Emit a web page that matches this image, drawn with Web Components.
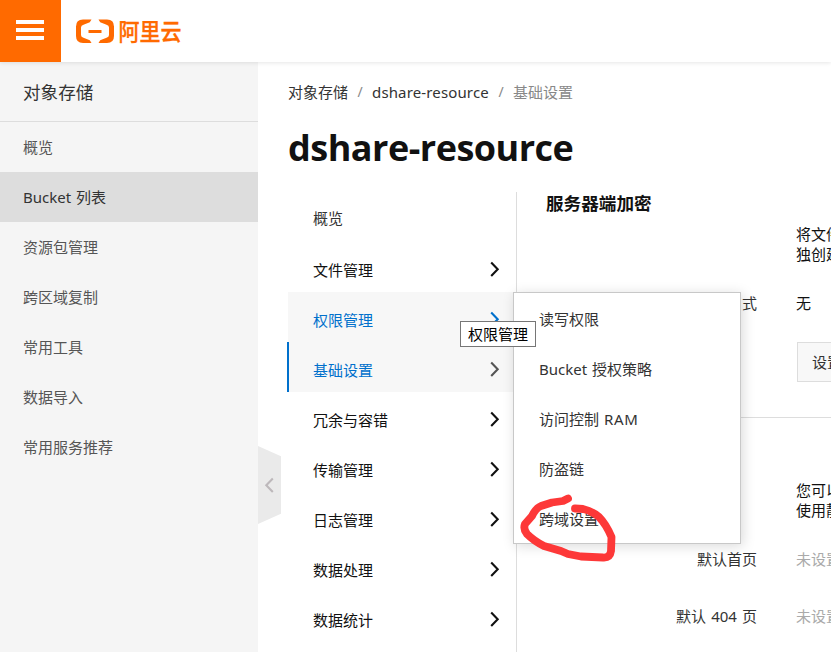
<!DOCTYPE html>
<html lang="zh-CN">
<head>
<meta charset="utf-8">
<title>dshare-resource</title>
<style>
html,body{margin:0;height:100%;overflow:hidden}
body{font:15px/20px "Noto Sans","Noto Sans CJK SC",sans-serif;color:#333;background:#fff}
</style>
</head>
<body>
<console-app></console-app>
<script>
function define(name, html) {
  customElements.define(name, class extends HTMLElement {
    constructor() {
      super();
      this.attachShadow({mode: 'open'}).innerHTML = html;
    }
  });
}

define('chevron-icon', `<style>
:host{display:block;width:10px;height:16px;flex:none}
:host([left]){transform:scaleX(-1)}
svg{display:block}
</style><svg width="10" height="16" viewBox="0 0 10 16" fill="none" stroke="currentColor" stroke-width="2.1"><path d="M1.2 1.500 7.700 8.200 1.200 14.900"/></svg>`);

define('top-bar', `<style>
:host{display:flex;height:62px;background:#fff;position:relative;z-index:2;box-shadow:0 1px 4px rgba(0,0,0,.1)}
.menu{width:61px;background:#ff6a00;display:flex;flex-direction:column;align-items:center;gap:4px;padding-top:19.5px;box-sizing:border-box}
.menu i{width:28px;height:4px;background:#fff;margin-right:2px}
.brand{display:flex;align-items:flex-start;padding:19px 0 0 15px;color:#ff6a00}
.name{font:500 21px/25px "Noto Sans CJK SC",sans-serif;margin-left:4.5px;margin-top:-1px;-webkit-text-stroke:.3px #ff6a00;transform:scaleY(1.1)}
</style>
<div class="menu"><i></i><i></i><i></i></div>
<div class="brand">
<svg width="38" height="24" viewBox="0 0 38 24" fill="#ff6a00"><path d="M15.500 .5H7Q0 .5 0 7.500V17Q0 24 7 24H15.500L13.800 21.200 7.500 18.800Q5 18 5 16V8.500Q5 6.500 7.500 5.700L13.800 3.300ZM22.500 .5H31Q38 .5 38 7.500V17Q38 24 31 24H22.500L24.200 21.200 30.500 18.800Q33 18 33 16V8.500Q33 6.500 30.500 5.700L24.200 3.300ZM12.500 11H25.500V14H12.500Z"/></svg>
<span class="name">阿里云</span></div>`);

define('side-item', `<style>
:host{display:flex;align-items:center;height:50px;padding-left:23px;color:#555;box-sizing:border-box}
:host([active]){background:#ddd;color:#333;word-spacing:1px}
</style><span><slot></slot></span>`);

define('side-bar', `<style>
:host{display:block;width:258px;background:#f5f5f5;flex:none}
.title{height:59px;border-bottom:1px solid #ddd;display:flex;align-items:center;padding-left:23px;font-size:17.6px;color:#333}
</style><div class="title"><span>对象存储</span></div><slot></slot>`);

define('collapse-handle', `<style>
:host{position:absolute;left:258px;top:446px;width:23px;height:78px;background:#eaeaea;color:#bdb8bb;clip-path:polygon(0 0,100% 13%,100% 87%,0 100%);display:flex;align-items:center;padding-left:6px;box-sizing:border-box}
</style><chevron-icon left></chevron-icon>`);

define('bread-crumb', `<style>
:host{display:flex;height:20px;align-items:center}
i{font-style:normal;color:#888;width:24px;text-align:center;font-size:14px}
.last{color:#888}
.mid{width:117px;letter-spacing:.14px}
</style><span>对象存储</span><i>/</i><span class="mid">dshare-resource</span><i>/</i><span class="last">基础设置</span>`);

define('nav-item', `<style>
:host{display:flex;align-items:center;height:50px;padding:5px 16px 0 25px;box-sizing:border-box;color:#111;justify-content:space-between}
:host([plain]){color:#333;padding-top:2px}
:host([plain]) chevron-icon{display:none}
:host([lit]){background:#f7f7f7;color:#0070cc}
:host([current]){border-left:2px solid #0070cc;margin-left:-1px;padding-left:24px}
:host([current]) chevron-icon{color:#555}
chevron-icon{margin-bottom:1px}
</style><span><slot></slot></span><chevron-icon></chevron-icon>`);

define('sub-nav', `<style>
:host{display:block;width:228px;height:460px;border-right:1px solid #ddd;flex:none}
</style><slot></slot>`);

define('form-row', `<style>
:host{display:grid;grid-template-columns:211px 1fr;column-gap:39px;line-height:20px;white-space:nowrap;color:#333}
.l{text-align:right}
</style><div class="l"><slot name="label"></slot></div><div><slot></slot></div>`);

define('detail-panel', `<style>
:host{display:block;flex:1;min-width:0;overflow:hidden;padding-left:29px;height:460px;box-sizing:border-box}
h2{font-size:17.6px;line-height:24px;margin:-1px 0 9px;color:#111;font-weight:700}
.a{display:flow-root;border-bottom:1px solid #ddd;box-sizing:border-box;height:226px}
.d{color:#111}.m{color:#aaa}
button{font:inherit;display:block;height:40px;width:62px;box-sizing:border-box;padding:0 14px;border:1px solid #ddd;background:#f8f8f8;color:#333;margin-left:1px;text-align:left}
</style>
<div class="a"><h2>服务器端加密</h2>
<form-row style="color:#111">将文件<br>独创建</form-row>
<form-row style="margin-top:29px"><span slot="label">式</span><span class="d">无</span></form-row>
<form-row style="margin-top:29px"><button>设置</button></form-row></div>
<form-row style="margin-top:62px;color:#111">您可以<br>使用静</form-row>
<form-row style="margin-top:29px"><span slot="label">默认首页</span><span class="m">未设置</span></form-row>
<form-row style="margin-top:37px"><span slot="label" style="word-spacing:1.2px">默认 404 页</span><span class="m">未设置</span></form-row>`);

define('fly-menu', `<style>
:host{position:absolute;left:513px;top:292px;width:228px;height:252px;box-sizing:border-box;border:1px solid #c8c8c8;background:#fff;box-shadow:2px 2px 12px rgba(0,0,0,.15);z-index:3}
div{height:50px;display:flex;align-items:center;padding:1px 0 0 25px;box-sizing:border-box;word-spacing:1px}
.ram{letter-spacing:.7px}
</style><div>读写权限</div><div>Bucket 授权策略</div><div><span>访问控制 <span class="ram">RAM</span></span></div><div>防盗链</div><div>跨域设置</div>`);

define('hover-tip', `<style>
:host{position:absolute;left:460px;top:321px;width:76px;height:26px;box-sizing:border-box;border:1px solid #767676;background:#fff;color:#000;display:flex;align-items:center;padding-left:7px;z-index:4}
</style><span><slot></slot></span>`);

define('pen-mark', `<style>
:host{position:absolute;left:515px;top:490px;width:105px;height:76px;z-index:5}
svg{display:block}
</style><svg width="105" height="76" viewBox="515 490 105 76" fill="none" stroke="#fd3838" stroke-width="7.800" stroke-linecap="round" stroke-linejoin="round"><path d="M568 498.5 563 501 552 502.500 541 506Q536 508 532 516L525 524Q523 529 527 534Q534 541 544 546L561 551 568 554 581 556.500 603 557.500Q610 558 611 551L611.500 537Q606 524 599 517Q592 511 583 509L575 508.500"/></svg>`);

define('console-app', `<style>
:host{display:flex;flex-direction:column;height:652px;width:831px;overflow:hidden;position:relative}
.body{display:flex;flex:1;min-height:0}
main{flex:1;min-width:0;padding:20px 0 0 30px}
h1{font-size:36px;line-height:48px;margin:22px 0 20px;color:#111;font-weight:700;font-family:"Open Sans",sans-serif;letter-spacing:-.5px}
.cols{display:flex}
</style>
<top-bar></top-bar>
<div class="body">
<side-bar><side-item>概览</side-item><side-item active>Bucket 列表</side-item><side-item>资源包管理</side-item><side-item>跨区域复制</side-item><side-item>常用工具</side-item><side-item>数据导入</side-item><side-item>常用服务推荐</side-item></side-bar>
<main><bread-crumb></bread-crumb><h1>dshare-resource</h1>
<div class="cols"><sub-nav><nav-item plain>概览</nav-item><nav-item>文件管理</nav-item><nav-item lit>权限管理</nav-item><nav-item lit current>基础设置</nav-item><nav-item>冗余与容错</nav-item><nav-item>传输管理</nav-item><nav-item>日志管理</nav-item><nav-item>数据处理</nav-item><nav-item>数据统计</nav-item></sub-nav><detail-panel></detail-panel></div></main>
</div>
<collapse-handle></collapse-handle><fly-menu></fly-menu><hover-tip>权限管理</hover-tip><pen-mark></pen-mark>`);
</script>
</body>
</html>
